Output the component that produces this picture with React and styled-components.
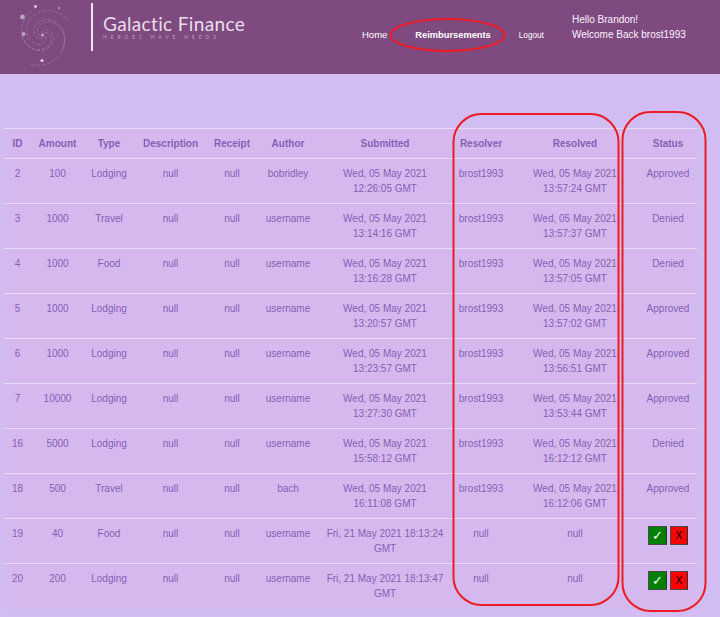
import React from "react";
import styled, { createGlobalStyle } from "styled-components";

const Global = createGlobalStyle`
  html, body { margin: 0; padding: 0; background: #d1bdf2; }
  body { font-family: "Liberation Sans", Arial, sans-serif; }
`;

const Page = styled.div`
  position: relative;
  width: 720px;
  height: 617px;
  overflow: hidden;
  background: #d1bdf2;
`;

const Header = styled.header`
  display: flex;
  align-items: flex-start;
  height: 74px;
  background: #7f4a80;
  color: #fff;
`;

const Brand = styled.div`
  display: flex;
  width: 362px;
  flex: none;
  align-items: flex-start;
`;

const LogoMark = styled.svg`
  display: block;
  flex: none;
  width: 91px;
  height: 66px;
  filter: blur(0.45px);
`;

const Divider = styled.div`
  flex: none;
  width: 2px;
  height: 48px;
  margin-top: 3px;
  background: #eee5ee;
`;

const BrandText = styled.div`
  padding: 12px 0 0 10px;
`;

const BrandName = styled.div`
  font-family: Lato, "Open Sans", sans-serif;
  font-size: 19px;
  line-height: 23px;
  letter-spacing: 0.35px;
  color: #e9dfea;
  white-space: nowrap;
`;

const Tagline = styled.div`
  margin-top: -2px;
  font-family: Lato, sans-serif;
  font-size: 5px;
  line-height: 8px;
  letter-spacing: 3.85px;
  color: #b9a3bd;
  white-space: nowrap;
`;

const Nav = styled.nav`
  display: flex;
  align-items: baseline;
  width: 210px;
  flex: none;
  padding-top: 29px;
`;

const NavLink = styled.a`
  font-size: ${(p) => p.$size || 9.5}px;
  line-height: 12px;
  font-weight: ${(p) => (p.$bold ? 700 : 400)};
  margin-left: ${(p) => p.$gap || 0}px;
  color: #fff;
  white-space: nowrap;
`;

const Greeting = styled.div`
  font-size: 10px;
  line-height: 15px;
  padding-top: 12px;
  color: #fbf3ff;
  white-space: nowrap;
`;

const Content = styled.main`
  padding: 54px 23px 0 4px;
`;

const Table = styled.table`
  width: 693px;
  table-layout: fixed;
  border-collapse: collapse;
  background: #d5b9ee;
  color: #8560b5;
  font-size: 10px;
  line-height: 15px;
  text-align: center;
`;

const HeadCell = styled.th`
  height: 29px;
  padding: 0;
  border-top: 1px solid #e6dcf2;
  border-bottom: 1px solid #e6dcf2;
  font-weight: 700;
  vertical-align: middle;
`;

const Row = styled.tr`
  height: 45px;
  & + & td { border-top: 1px solid #e6dcf2; }
`;

const Cell = styled.td`
  padding: 7px 4px 0;
  vertical-align: top;
  box-sizing: border-box;
`;

const Actions = styled.div`
  display: flex;
  justify-content: center;
  gap: 3px;
`;

const ActionButton = styled.button`
  flex: none;
  width: ${(p) => p.$w}px;
  height: 19px;
  padding: 0;
  border: 1px solid #4a4a4a;
  border-right-color: #333;
  background: ${(p) => p.$bg};
  color: ${(p) => p.$fg};
  font-family: "DejaVu Sans", "Liberation Sans", sans-serif;
  font-size: ${(p) => p.$size}px;
  line-height: 16px;
`;

const Annotations = styled.svg`
  position: absolute;
  inset: 0;
  width: 720px;
  height: 617px;
  pointer-events: none;
`;

const widths = [27, 53, 50, 73, 50, 62, 132, 60, 128, 58];
const heads = ["ID", "Amount", "Type", "Description", "Receipt", "Author", "Submitted", "Resolver", "Resolved", "Status"];
const rows = [
  ["2", "100", "Lodging", "bobridley", "Wed, 05 May 2021 12:26:05 GMT", "brost1993", "Wed, 05 May 2021 13:57:24 GMT", "Approved"],
  ["3", "1000", "Travel", "username", "Wed, 05 May 2021 13:14:16 GMT", "brost1993", "Wed, 05 May 2021 13:57:37 GMT", "Denied"],
  ["4", "1000", "Food", "username", "Wed, 05 May 2021 13:16:28 GMT", "brost1993", "Wed, 05 May 2021 13:57:05 GMT", "Denied"],
  ["5", "1000", "Lodging", "username", "Wed, 05 May 2021 13:20:57 GMT", "brost1993", "Wed, 05 May 2021 13:57:02 GMT", "Approved"],
  ["6", "1000", "Lodging", "username", "Wed, 05 May 2021 13:23:57 GMT", "brost1993", "Wed, 05 May 2021 13:56:51 GMT", "Approved"],
  ["7", "10000", "Lodging", "username", "Wed, 05 May 2021 13:27:30 GMT", "brost1993", "Wed, 05 May 2021 13:53:44 GMT", "Approved"],
  ["16", "5000", "Lodging", "username", "Wed, 05 May 2021 15:58:12 GMT", "brost1993", "Wed, 05 May 2021 16:12:12 GMT", "Denied"],
  ["18", "500", "Travel", "bach", "Wed, 05 May 2021 16:11:08 GMT", "brost1993", "Wed, 05 May 2021 16:12:06 GMT", "Approved"],
  ["19", "40", "Food", "username", "Fri, 21 May 2021 18:13:24 GMT", "null", "null", null],
  ["20", "200", "Lodging", "username", "Fri, 21 May 2021 18:13:47 GMT", "null", "null", null],
];

const spiral = (turns, phase, scale) => {
  let d = "";
  for (let i = 0; i <= 40; i++) {
    const t = i / 40;
    const a = phase + t * turns * Math.PI * 2;
    const r = 2 + t * scale;
    d += `${i ? "L" : "M"}${(43 + Math.cos(a) * r).toFixed(1)} ${(35 + Math.sin(a) * r).toFixed(1)}`;
  }
  return d;
};

const Logo = () => (
  <LogoMark viewBox="0 0 91 66">
    <g fill="none" stroke="#b79bbb" strokeWidth="0.6" strokeDasharray="4 1.5" opacity="0.7">
      <path d={spiral(0.85, 0.4, 27)} />
      <path d={spiral(0.85, 1.6, 22)} />
      <path d={spiral(0.85, 2.9, 30)} />
      <path d={spiral(0.85, 4.1, 19)} />
      <path d={spiral(0.85, 5.2, 24)} />
    </g>
    <g fill="#b9a6bc">
      <circle cx="22.5" cy="17" r="2.4" />
      <circle cx="23.5" cy="34" r="1.9" />
      <circle cx="42.5" cy="35" r="1.5" />
    </g>
    <g fill="#dfd5e1">
      <circle cx="35.5" cy="6.5" r="1.4" />
      <circle cx="59" cy="8" r="1.2" fill="#ab90af" />
      <circle cx="42" cy="60.5" r="1.5" />
    </g>
  </LogoMark>
);

export default function App() {
  return (
    <Page>
      <Global />
      <Header>
        <Brand>
          <Logo />
          <Divider />
          <BrandText>
            <BrandName>Galactic Finance</BrandName>
            <Tagline>HEROES HAVE NEEDS</Tagline>
          </BrandText>
        </Brand>
        <Nav>
          <NavLink>Home</NavLink>
          <NavLink $bold $size={9.3} $gap={28}>Reimbursements</NavLink>
          <NavLink $size={8.2} $gap={28}>Logout</NavLink>
        </Nav>
        <Greeting>
          Hello Brandon!
          <br />
          Welcome Back brost1993
        </Greeting>
      </Header>
      <Content>
        <Table>
          <colgroup>
            {widths.map((w, i) => (
              <col key={i} style={{ width: w }} />
            ))}
          </colgroup>
          <thead>
            <tr>
              {heads.map((h) => (
                <HeadCell key={h}>{h}</HeadCell>
              ))}
            </tr>
          </thead>
          <tbody>
            {rows.map((r) => (
              <Row key={r[0]}>
                <Cell>{r[0]}</Cell>
                <Cell>{r[1]}</Cell>
                <Cell>{r[2]}</Cell>
                <Cell>null</Cell>
                <Cell>null</Cell>
                <Cell>{r[3]}</Cell>
                <Cell>{r[4]}</Cell>
                <Cell>{r[5]}</Cell>
                <Cell>{r[6]}</Cell>
                <Cell>
                  {r[7] || (
                    <Actions>
                      <ActionButton $w={19} $size={13} $bg="#008000" $fg="#fff">✓</ActionButton>
                      <ActionButton $w={18} $size={10} $bg="#ff0000" $fg="#000">X</ActionButton>
                    </Actions>
                  )}
                </Cell>
              </Row>
            ))}
          </tbody>
        </Table>
      </Content>
      <Annotations viewBox="0 0 720 617">
        <g fill="none" stroke="#ed1c24" strokeWidth="2">
          <ellipse cx="447.5" cy="35" rx="57" ry="16" />
          <rect x="453.5" y="114" width="165" height="491" rx="28" />
          <rect x="622.5" y="112" width="83" height="499" rx="28" />
        </g>
      </Annotations>
    </Page>
  );
}
